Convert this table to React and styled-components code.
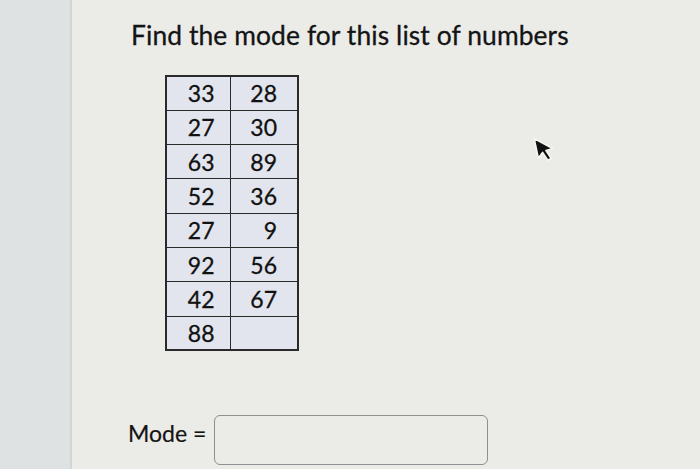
import React from 'react'
import styled, { createGlobalStyle } from 'styled-components'

const GlobalStyle = createGlobalStyle`
	html, body {
		margin: 0;
		padding: 0;
		height: 100%;
		background: #eaebe7;
	}
	#root {
		height: 100%;
	}
`;

function App() {
	const rows = [
		[33, 28],
		[27, 30],
		[63, 89],
		[52, 36],
		[27, 9],
		[92, 56],
		[42, 67],
		[88, ''],
	];

	return (
		<Page>
			<GlobalStyle />
			<Sidebar />
			<Main>
				<Title>Find the mode for this list of numbers</Title>
				<NumberTable>
					<tbody>
						{rows.map((row, i) => (
							<tr key={i}>
								<Cell>{row[0]}</Cell>
								<Cell wide>{row[1]}</Cell>
							</tr>
						))}
					</tbody>
				</NumberTable>
				<AnswerRow>
					<Label>Mode =</Label>
					<AnswerInput type="text" />
				</AnswerRow>
				<Cursor width="22" height="31" viewBox="0 0 18 26">
					<path
						d="M2 2 L2 19 L6.5 15 L9.5 22.5 L12.5 21.2 L9.6 14 L15.5 13.6 Z"
						fill="#111"
						stroke="#f4f4f2"
						strokeWidth="1.4"
						strokeLinejoin="round"
					/>
				</Cursor>
			</Main>
		</Page>
	);
}

const Page = styled.div`
	display: flex;
	height: 469px;
	font-family: Lato, 'Open Sans', sans-serif;
	color: #1f1f1f;
	overflow: hidden;
`;

const Sidebar = styled.div`
	width: 70px;
	flex-shrink: 0;
	background: #dfe2e2;
	border-right: 2px solid #d2d5d5;
	box-shadow: 1px 0 2px rgba(0, 0, 0, 0.06);
`;

const Main = styled.div`
	position: relative;
	flex: 1;
	padding: 18px 0 0 59px;
	background: #ebebe8;
`;

const Title = styled.h1`
	margin: 0;
	font-size: 26.4px;
	font-weight: 400;
	line-height: 34px;
	letter-spacing: 0.1px;
	color: #141414;
	-webkit-text-stroke: 0.3px #141414;
`;

const NumberTable = styled.table`
	margin: 23px 0 0 34px;
	border-collapse: collapse;
	border: 2px solid #2a2a2a;
`;

const Cell = styled.td`
	width: ${({ wide }) => (wide ? '68px' : '64px')};
	height: 34.3px;
	padding: 0 ${({ wide }) => (wide ? '20px' : '15px')} 0 0;
	box-sizing: border-box;
	border: 1.5px solid #2a2a2a;
	background: #e2e5ed;
	text-align: right;
	font-size: 23px;
	line-height: 32px;
	color: #111;
	-webkit-text-stroke: 0.3px #111;
`;

const AnswerRow = styled.div`
	display: flex;
	align-items: flex-start;
	gap: 8px;
	margin: 64px 0 0 -3px;
`;

const Label = styled.span`
	margin-top: 3px;
	font-size: 23px;
	line-height: 30px;
	color: #141414;
	-webkit-text-stroke: 0.2px #141414;
`;

const AnswerInput = styled.input`
	width: 274px;
	height: 50px;
	box-sizing: border-box;
	border: 1.5px solid #8d8f90;
	border-radius: 6px;
	background: #ebebe8;
	outline: none;
`;

const Cursor = styled.svg`
	position: absolute;
	left: 462px;
	top: 134px;
	transform: rotate(-12deg);
`;

export default App
